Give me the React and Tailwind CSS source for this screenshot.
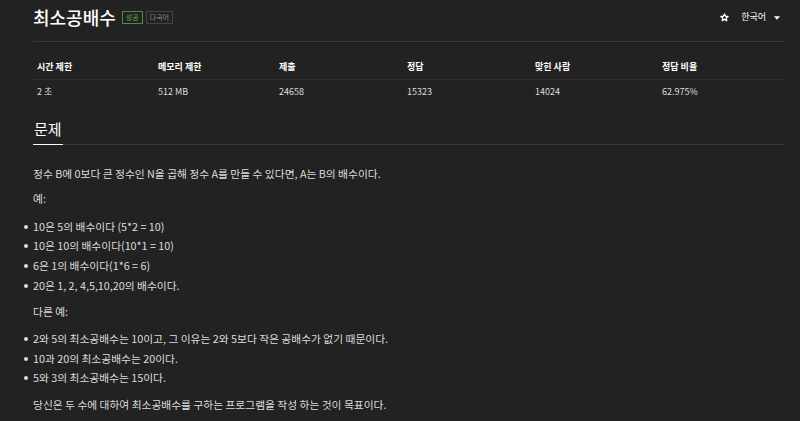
const font = { fontFamily: '"Noto Sans CJK KR", "Noto Sans", sans-serif' }

const stats = [
  ['시간 제한', '2 초'],
  ['메모리 제한', '512 MB'],
  ['제출', '24658'],
  ['정답', '15323'],
  ['맞힌 사람', '14024'],
  ['정답 비율', '62.975%'],
]

const examples = [
  '10은 5의 배수이다 (5*2 = 10)',
  '10은 10의 배수이다(10*1 = 10)',
  '6은 1의 배수이다(1*6 = 6)',
  '20은 1, 2, 4,5,10,20의 배수이다.',
]

const others = [
  '2와 5의 최소공배수는 10이고, 그 이유는 2와 5보다 작은 공배수가 없기 때문이다.',
  '10과 20의 최소공배수는 20이다.',
  '5와 3의 최소공배수는 15이다.',
]

function BulletList({ items }) {
  return (
    <ul className="flex flex-col">
      {items.map((item) => (
        <li key={item} className="flex items-center h-[19.6px]">
          <span className="w-[4px] h-[4px] rounded-full bg-[#dddddd] ml-[-9px] mr-[5px]" />
          {item}
        </li>
      ))}
    </ul>
  )
}

export default function App() {
  return (
    <div className="w-[800px] h-[421px] overflow-hidden bg-[#222222] text-[#dddddd]" style={font}>
      <div className="mx-[33px] w-[752px]">
        {/* 제목 */}
        <div className="flex items-center justify-between h-[42px] border-b border-[#3a3a3a] pb-[7px]">
          <div className="flex items-center gap-[6px]">
            <h1 className="text-[18px] leading-none text-white font-medium">최소공배수</h1>
            <span className="flex items-center h-[13px] px-[3px] border border-[#4c8c3c] text-[#5fae4f] text-[7px] leading-none mt-[1px]">성공</span>
            <span className="flex items-center h-[13px] px-[3px] border border-[#444444] text-[#888888] text-[7px] leading-none mt-[1px] ml-[-3px]">다국어</span>
          </div>
          <div className="flex items-center text-white text-[9px] mr-[5px]">
            <svg viewBox="0 0 24 24" className="w-[9px] h-[9px] mr-[12px]" fill="none" stroke="white" strokeWidth="3.5" strokeLinejoin="round">
              <path d="M12 2.5l2.8 6.3 6.8.6-5.2 4.5 1.6 6.7-6-3.6-6 3.6 1.6-6.7-5.2-4.5 6.8-.6z" />
            </svg>
            <span>한국어</span>
            <svg viewBox="0 0 10 6" className="w-[6px] h-[4px] ml-[8px] mt-[1px]" fill="white">
              <path d="M0 0h10L5 6z" />
            </svg>
          </div>
        </div>

        {/* 통계 */}
        <div className="grid grid-cols-[121px_121px_128px_128px_127px_127px] text-[9px] mt-[13px]">
          {stats.map(([k]) => (
            <div key={k} className="h-[25px] flex items-center pl-[4px] font-bold text-white border-b border-[#2e2e2e]">{k}</div>
          ))}
          {stats.map(([k, v]) => (
            <div key={k + v} className="h-[23px] flex items-center pl-[4px] pt-[1px] text-[#dddddd]">{v}</div>
          ))}
        </div>

        {/* 문제 */}
        <div className="mt-[18px] flex border-b border-[#3a3a3a]">
          <h2 className="text-[15px] leading-none text-white pb-[8px] border-b border-white mb-[-1px] px-[1px]">문제</h2>
        </div>

        <div className="text-[10.75px] mt-[20px]">
          <p className="h-[19px] flex items-center">정수 B에 0보다 큰 정수인 N을 곱해 정수 A를 만들 수 있다면, A는 B의 배수이다.</p>
          <p className="h-[19px] flex items-center mt-[6px]">예:</p>
          <div className="mt-[8px]">
            <BulletList items={examples} />
          </div>
          <p className="h-[19px] flex items-center mt-[7px]">다른 예:</p>
          <div className="mt-[8px]">
            <BulletList items={others} />
          </div>
          <p className="h-[19px] flex items-center mt-[7px]">당신은 두 수에 대하여 최소공배수를 구하는 프로그램을 작성 하는 것이 목표이다.</p>
        </div>
      </div>
    </div>
  )
}
